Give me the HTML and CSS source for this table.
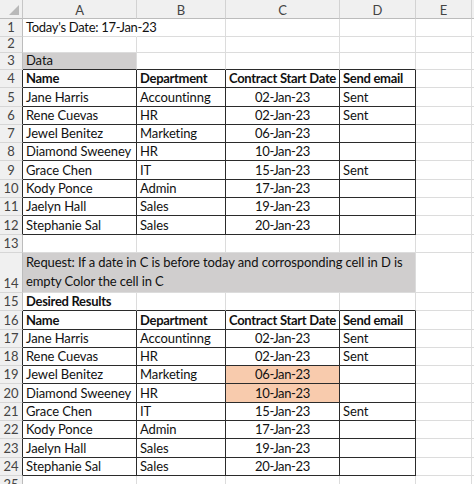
FILE: index.html
```html
<!DOCTYPE html>
<html>
<head>
<meta charset="utf-8">
<link rel="stylesheet" href="styles.css">
</head>
<body>
<div class="sheet">
  <div class="corner"><span class="tri"></span></div>
  <div class="ch">A</div><div class="ch">B</div><div class="ch">C</div><div class="ch">D</div><div class="ch">E</div><div class="ch"></div>

  <div class="c rh">1</div><div class="c ov">Today's Date: 17-Jan-23</div><div class="c"></div><div class="c"></div><div class="c"></div><div class="c"></div><div class="c"></div>
  <div class="c rh">2</div><div class="c"></div><div class="c"></div><div class="c"></div><div class="c"></div><div class="c"></div><div class="c"></div>
  <div class="c rh">3</div><div class="c fill tb">Data</div><div class="c tb"></div><div class="c tb"></div><div class="c tb"></div><div class="c"></div><div class="c"></div>

  <div class="c rh rt">4</div><div class="c t b">Name</div><div class="c t b">Department</div><div class="c t b">Contract Start Date</div><div class="c t b">Send email</div><div class="c"></div><div class="c"></div>
  <div class="c rh rt">5</div><div class="c t">Jane Harris</div><div class="c t">Accountinng</div><div class="c t ctr">02-Jan-23</div><div class="c t">Sent</div><div class="c"></div><div class="c"></div>
  <div class="c rh rt">6</div><div class="c t">Rene Cuevas</div><div class="c t">HR</div><div class="c t ctr">02-Jan-23</div><div class="c t">Sent</div><div class="c"></div><div class="c"></div>
  <div class="c rh rt">7</div><div class="c t">Jewel Benitez</div><div class="c t">Marketing</div><div class="c t ctr">06-Jan-23</div><div class="c t"></div><div class="c"></div><div class="c"></div>
  <div class="c rh rt">8</div><div class="c t">Diamond Sweeney</div><div class="c t">HR</div><div class="c t ctr">10-Jan-23</div><div class="c t"></div><div class="c"></div><div class="c"></div>
  <div class="c rh rt">9</div><div class="c t">Grace Chen</div><div class="c t">IT</div><div class="c t ctr">15-Jan-23</div><div class="c t">Sent</div><div class="c"></div><div class="c"></div>
  <div class="c rh rt">10</div><div class="c t">Kody Ponce</div><div class="c t">Admin</div><div class="c t ctr">17-Jan-23</div><div class="c t"></div><div class="c"></div><div class="c"></div>
  <div class="c rh rt">11</div><div class="c t">Jaelyn Hall</div><div class="c t">Sales</div><div class="c t ctr">19-Jan-23</div><div class="c t"></div><div class="c"></div><div class="c"></div>
  <div class="c rh rt">12</div><div class="c t">Stephanie Sal</div><div class="c t">Sales</div><div class="c t ctr">20-Jan-23</div><div class="c t"></div><div class="c"></div><div class="c"></div>

  <div class="c rh">13</div><div class="c"></div><div class="c"></div><div class="c"></div><div class="c"></div><div class="c"></div><div class="c"></div>
  <div class="c rh">14</div><div class="c fill merged">Request: If a date in C is before today and corrosponding cell in D is<br>empty Color the cell in C</div><div class="c"></div><div class="c"></div>
  <div class="c rh">15</div><div class="c tb b">Desired Results</div><div class="c tb"></div><div class="c tb"></div><div class="c tb"></div><div class="c"></div><div class="c"></div>

  <div class="c rh rt">16</div><div class="c t b">Name</div><div class="c t b">Department</div><div class="c t b">Contract Start Date</div><div class="c t b">Send email</div><div class="c"></div><div class="c"></div>
  <div class="c rh rt">17</div><div class="c t">Jane Harris</div><div class="c t">Accountinng</div><div class="c t ctr">02-Jan-23</div><div class="c t">Sent</div><div class="c"></div><div class="c"></div>
  <div class="c rh rt">18</div><div class="c t">Rene Cuevas</div><div class="c t">HR</div><div class="c t ctr">02-Jan-23</div><div class="c t">Sent</div><div class="c"></div><div class="c"></div>
  <div class="c rh rt">19</div><div class="c t">Jewel Benitez</div><div class="c t">Marketing</div><div class="c t ctr org">06-Jan-23</div><div class="c t"></div><div class="c"></div><div class="c"></div>
  <div class="c rh rt">20</div><div class="c t">Diamond Sweeney</div><div class="c t">HR</div><div class="c t ctr org">10-Jan-23</div><div class="c t"></div><div class="c"></div><div class="c"></div>
  <div class="c rh rt">21</div><div class="c t">Grace Chen</div><div class="c t">IT</div><div class="c t ctr">15-Jan-23</div><div class="c t">Sent</div><div class="c"></div><div class="c"></div>
  <div class="c rh rt">22</div><div class="c t">Kody Ponce</div><div class="c t">Admin</div><div class="c t ctr">17-Jan-23</div><div class="c t"></div><div class="c"></div><div class="c"></div>
  <div class="c rh rt">23</div><div class="c t">Jaelyn Hall</div><div class="c t">Sales</div><div class="c t ctr">19-Jan-23</div><div class="c t"></div><div class="c"></div><div class="c"></div>
  <div class="c rh rt">24</div><div class="c t">Stephanie Sal</div><div class="c t">Sales</div><div class="c t ctr">20-Jan-23</div><div class="c t"></div><div class="c"></div><div class="c"></div>
  <div class="c rh">25</div><div class="c"></div><div class="c"></div><div class="c"></div><div class="c"></div><div class="c"></div><div class="c"></div>
</div>
</body>
</html>
```

FILE: styles.css
```css
html, body {
  margin: 0;
  padding: 0;
  background: #ffffff;
}

.sheet {
  display: grid;
  grid-template-columns: 23px 114px 89px 114px 76px 56px 1fr;
  grid-template-rows: 19px 18px 16px 17px repeat(10, 18.3px) 40px repeat(10, 18.3px) 18px;
  width: 474px;
  height: 484px;
  overflow: hidden;
  font-family: Lato, "Liberation Sans", sans-serif;
  font-size: 13px;
  letter-spacing: -0.1px;
  color: #111;
  background: #fff;
}

.corner {
  position: relative;
  background: #f0f0f0;
  border-right: 1px solid #c6c6c6;
  border-bottom: 1px solid #bcbcbc;
  box-sizing: border-box;
}

.tri {
  position: absolute;
  right: 3px;
  bottom: 3px;
  width: 0;
  height: 0;
  border-left: 10px solid transparent;
  border-bottom: 10px solid #b9b9b9;
}

.ch {
  display: flex;
  align-items: center;
  justify-content: center;
  background: #f0f0f0;
  border-right: 1px solid #d2d2d2;
  border-bottom: 1px solid #bcbcbc;
  box-sizing: border-box;
  color: #444;
  font-size: 13px;
  padding-top: 1px;
}

.c {
  display: flex;
  align-items: flex-end;
  box-sizing: border-box;
  padding: 0 3px 1px 3px;
  border-right: 1px solid #dcdcdc;
  border-bottom: 1px solid #dcdcdc;
  white-space: nowrap;
  line-height: 16px;
  min-width: 0;
}

.rh {
  justify-content: center;
  padding: 0 0 1px 0;
  background: #f0f0f0;
  color: #444;
  letter-spacing: 0;
  border-right-color: #bcbcbc;
  border-bottom-color: #d6d6d6;
}

.rt {
  border-right-color: #2b2b2b;
}

.ov {
  border-right-color: transparent;
  overflow: visible;
  letter-spacing: -0.3px;
}

.t {
  border-right-color: #2b2b2b;
  border-bottom-color: #2b2b2b;
}

.tb {
  border-bottom-color: #2b2b2b;
}

.b {
  font-weight: bold;
  letter-spacing: -0.3px;
}

.ctr {
  justify-content: center;
  letter-spacing: -0.35px;
}

.fill {
  background: #d0cece;
}

.org {
  background: #f8cbad;
}

.merged {
  grid-column: span 4;
  white-space: nowrap;
  line-height: 19px;
  padding-bottom: 1px;
  border-bottom-color: #dcdcdc;
  border-right-color: #dcdcdc;
}
```
